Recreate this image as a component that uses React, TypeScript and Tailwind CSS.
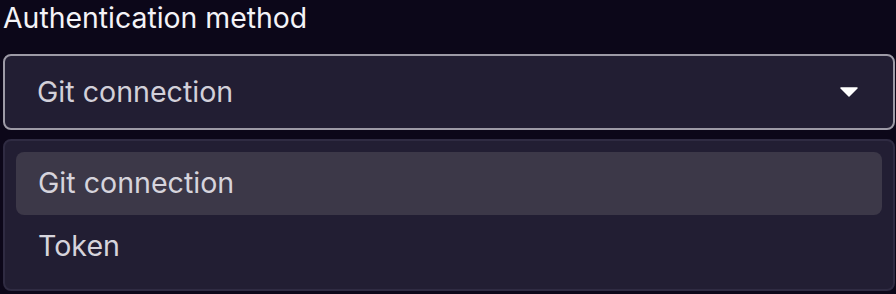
import React from 'react';

const App = () => {
    return (
        <div
            className="w-[896px] h-[294px] overflow-hidden bg-[#0c0719] pl-[3px] pr-[1px] pt-[1px]"
            style={{ fontFamily: 'Inter, "Noto Sans", sans-serif' }}
        >
            <label className="block text-[28.4px] leading-[34px] text-[#f4f3f7]">Authentication method</label>
            <div className="mt-[19px] flex h-[76px] items-center justify-between rounded-[8px] border-2 border-[#9d9aa6] bg-[#221e33] pl-[32px] pr-[35px]">
                <span className="text-[28.6px] text-[#d2d0d9]">Git connection</span>
                <svg width="18" height="10" viewBox="0 0 18 10">
                    <path d="M1 1 L17 1 L9 9 Z" fill="#ffffff" stroke="#ffffff" strokeWidth="1.5" strokeLinejoin="round" />
                </svg>
            </div>
            <div className="mt-[9px] rounded-[8px] border-2 border-[#2f2b42] bg-[#221e33] p-[11px]">
                <div className="flex h-[63px] items-center rounded-[8px] bg-[#3c3848] px-[22px] text-[28.6px] text-[#d6d4dc]">
                    Git connection
                </div>
                <div className="flex h-[63px] items-center px-[22px] text-[28.6px] text-[#d6d4dc]">Token</div>
            </div>
        </div>
    );
};

export default App;
